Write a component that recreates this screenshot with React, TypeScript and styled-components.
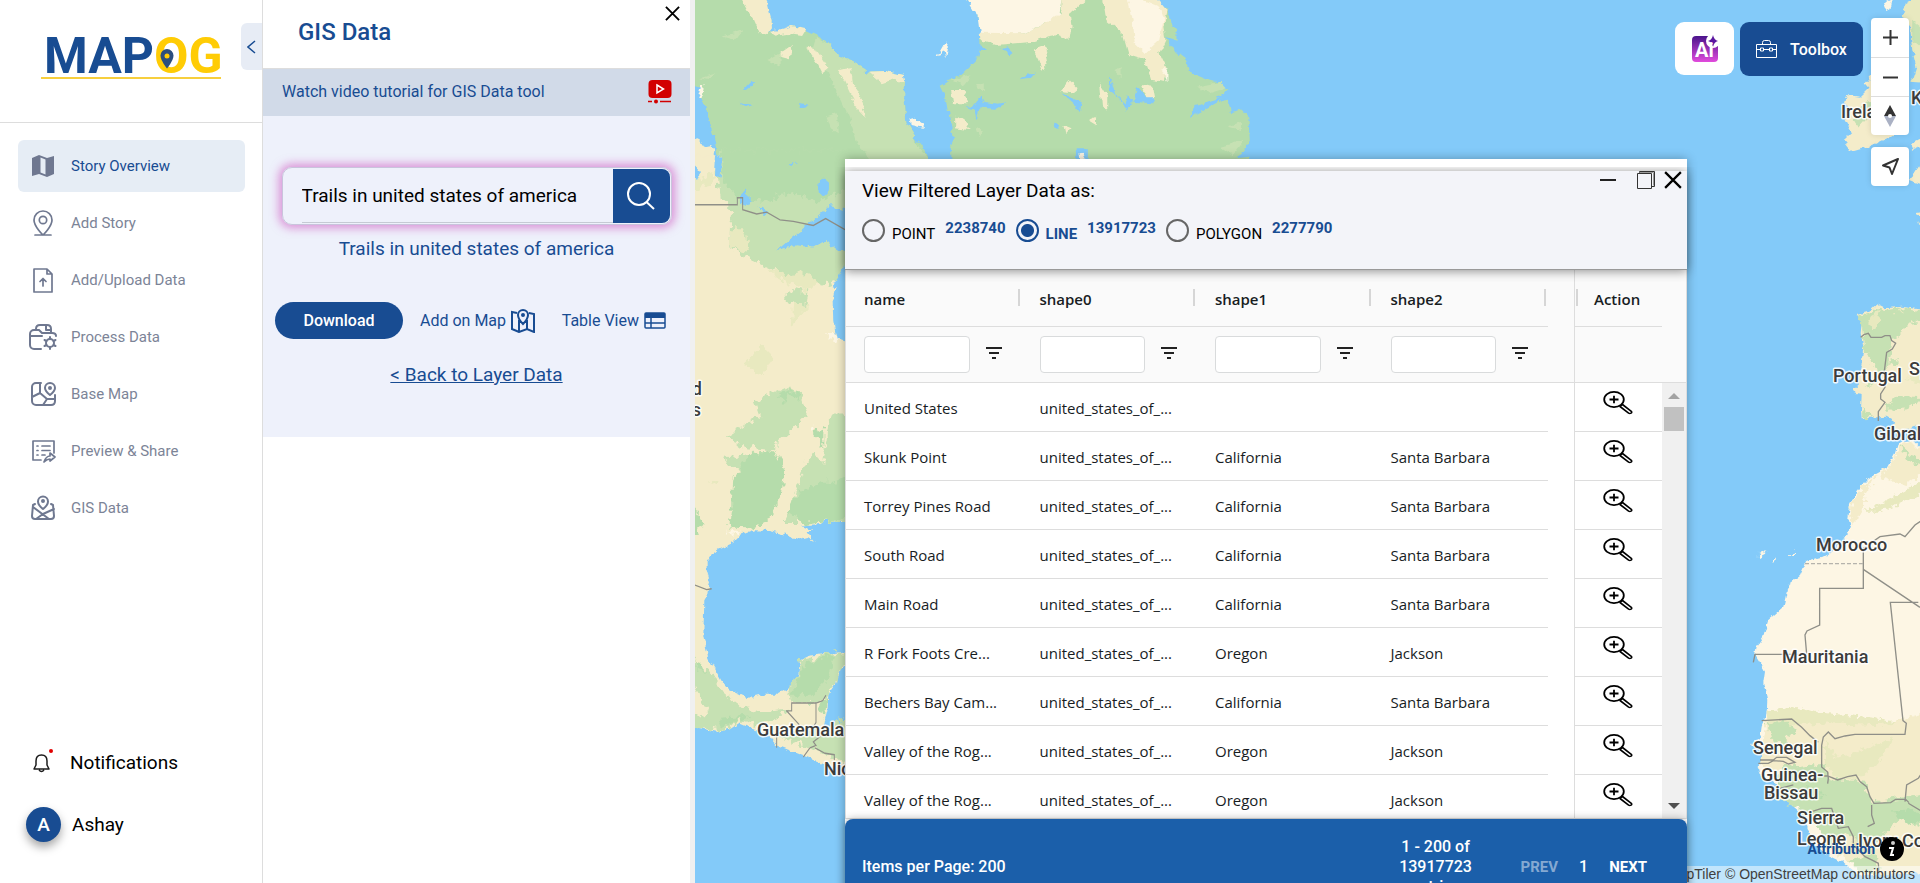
import React, { useState } from "react";
import styled, { createGlobalStyle, css } from "styled-components";

const navy = "#184c92";
const slate = "#6f7890";
const hairline = "#dddddd";

const GlobalStyle = createGlobalStyle`
  *, *::before, *::after { box-sizing: border-box; }
  body { margin: 0; font-family: Roboto, "Liberation Sans", sans-serif; color: #000; background: #fff; }
  button { font: inherit; border: 0; padding: 0; background: none; cursor: pointer; }
  input { font: inherit; margin: 0; }
  svg { display: block; flex: none; }
`;

const Page = styled.div`
  display: flex;
  height: 100vh;
  overflow: hidden;
`;

/* ---------- Sidebar ---------- */

const Sidebar = styled.nav`
  display: flex;
  flex-direction: column;
  flex: 0 0 263px;
  border-right: 1px solid ${hairline};
`;

const Brand = styled.header`
  position: relative;
  height: 123px;
  padding: 20px 0 0 40px;
  border-bottom: 1px solid ${hairline};
`;

const LogoText = styled.text`
  font-family: Roboto, sans-serif;
  font-weight: 700;
  font-size: 50px;
`;

const Collapse = styled.button`
  position: absolute;
  top: 23px;
  right: 0;
  display: grid;
  place-items: center;
  width: 21px;
  height: 47px;
  border-radius: 6px 0 0 6px;
  background: #e7ecf5;
`;

const Menu = styled.ul`
  display: flex;
  flex-direction: column;
  gap: 5px;
  flex: 1;
  margin: 0;
  padding: 17px 17px 0 18px;
  list-style: none;
`;

const MenuLink = styled.a<{ $active?: boolean }>`
  display: flex;
  align-items: center;
  gap: 14px;
  height: 52px;
  padding-left: 11px;
  border-radius: 6px;
  font-size: 15px;
  text-decoration: none;
  color: ${(p) => (p.$active ? navy : "#7c8497")};
  background: ${(p) => (p.$active ? "#e6edf5" : "transparent")};
`;

const Account = styled.div`
  display: flex;
  flex-direction: column;
  gap: 26px;
  padding: 0 24px 41px 26px;
`;

const AccountRow = styled.button`
  display: flex;
  align-items: center;
  gap: 11px;
  height: 36px;
  font-size: 19px;
  color: #000;
`;

const Avatar = styled.span`
  display: grid;
  place-items: center;
  width: 35px;
  height: 35px;
  border-radius: 50%;
  background: ${navy};
  color: #fff;
  font-weight: 500;
  box-shadow: 0 5px 10px rgba(0, 0, 0, 0.35);
`;

/* ---------- Tool panel ---------- */

const Panel = styled.section`
  flex: 0 0 432px;
  border-right: 5px solid #f0f0f0;
`;

const PanelHead = styled.header`
  display: flex;
  justify-content: space-between;
  height: 69px;
  padding: 5px 10px 0 35px;
  border-bottom: 1px solid ${hairline};
`;

const PanelTitle = styled.h1`
  margin: 0;
  padding-top: 12px;
  font-size: 24px;
  line-height: 30px;
  font-weight: 500;
  color: ${navy};
`;

const IconButton = styled.button`
  display: grid;
  place-items: center;
  width: 16px;
  height: 16px;
`;

const Tutorial = styled.a`
  display: flex;
  align-items: center;
  justify-content: space-between;
  height: 47px;
  padding: 0 18px 2px 19px;
  background: #d1dae8;
  color: ${navy};
  font-size: 16px;
  text-decoration: none;
`;

const PanelBody = styled.div`
  display: flex;
  flex-direction: column;
  align-items: center;
  height: 321px;
  padding: 51px 12px 0;
  background: #eef1fb;
  color: ${navy};
`;

const Search = styled.form`
  display: flex;
  width: 390px;
  height: 58px;
  padding: 1px 1px 1px 19px;
  border: 1px solid #c9c4dc;
  border-radius: 10px;
  overflow: hidden;
  box-shadow: 0 0 10px 3px rgba(205, 80, 190, 0.6);
`;

const SearchField = styled.input`
  flex: 1;
  min-width: 0;
  border: 0;
  border-bottom: 1px solid #c5cad4;
  padding: 0;
  outline: 0;
  background: transparent;
  font-size: 19px;
  color: #000;
`;

const SearchButton = styled.button`
  display: grid;
  place-items: center;
  width: 57px;
  background: ${navy};
  border-radius: 0 8px 8px 0;
`;

const Result = styled.p`
  margin: 12px 0 0;
  font-size: 19px;
  line-height: 24px;
`;

const Actions = styled.div`
  display: flex;
  align-items: center;
  width: 100%;
  margin-top: 41px;
  padding-right: 12px;
`;

const Download = styled.button`
  width: 128px;
  height: 37px;
  margin-right: 17px;
  border-radius: 19px;
  background: ${navy};
  color: #fff;
  font-size: 16px;
  font-weight: 500;
`;

const TextAction = styled.button`
  display: flex;
  align-items: center;
  gap: 5px;
  color: ${navy};
  font-size: 16px;
  &:last-child { margin-left: auto; }
`;

const BackLink = styled.a`
  margin-top: 24px;
  color: ${navy};
  font-size: 19px;
  line-height: 24px;
`;

/* ---------- Map ---------- */

const MapArea = styled.main`
  position: relative;
  flex: 1;
  min-width: 0;
  overflow: hidden;
  background: #83caf9;
`;

const MapCanvas = styled.svg`
  position: absolute;
  inset: 0;
  width: 100%;
  height: 100%;
`;

const PlaceName = styled.text`
  font-family: Roboto, sans-serif;
  font-weight: 500;
  font-size: 18px;
  fill: #3c3c3c;
  stroke: rgba(255, 255, 255, 0.85);
  stroke-width: 3px;
  stroke-linejoin: round;
  paint-order: stroke;
`;

const MapTools = styled.div`
  position: absolute;
  top: 18px;
  right: 11px;
  display: flex;
  align-items: flex-start;
`;

const AiButton = styled.button`
  display: grid;
  place-items: center;
  width: 59px;
  height: 53px;
  margin: 4px 6px 0 0;
  border-radius: 9px;
  background: #fff;
`;

const ToolboxButton = styled.button`
  display: flex;
  align-items: center;
  justify-content: center;
  gap: 13px;
  width: 123px;
  height: 54px;
  margin: 4px 8px 0 0;
  border-radius: 9px;
  background: ${navy};
  color: #fff;
  font-size: 16px;
  font-weight: 500;
`;

const NavStack = styled.div`
  display: flex;
  flex-direction: column;
  gap: 12px;
`;

const NavGroup = styled.div`
  width: 38px;
  border-radius: 4px;
  background: #fff;
  box-shadow: 0 0 6px rgba(0, 0, 0, 0.12);
`;

const NavButton = styled.button`
  display: grid;
  place-items: center;
  width: 100%;
  height: 39px;
  & + & { border-top: 1px solid ${hairline}; }
`;

const Credits = styled.footer`
  position: absolute;
  right: 0;
  bottom: 0;
  padding: 0 5px;
  background: rgba(255, 255, 255, 0.5);
  font: 14px/17px "Liberation Sans", Arial, sans-serif;
  color: #404040;
  white-space: nowrap;
`;

const Attribution = styled.button`
  position: absolute;
  right: 16px;
  bottom: 22px;
  display: flex;
  align-items: center;
  gap: 5px;
  color: ${navy};
  font-size: 14px;
  font-weight: 700;
  line-height: 24px;
`;

/* ---------- Data window ---------- */

const Window = styled.section`
  position: absolute;
  top: 159px;
  bottom: -32px;
  left: 150px;
  right: 233px;
  display: flex;
  flex-direction: column;
  background: #fff;
  box-shadow: 0 0 10px rgba(0, 0, 0, 0.3);
`;

const WindowHead = styled.header`
  position: relative;
  z-index: 1;
  flex: none;
  margin-top: 12px;
  height: 99px;
  padding: 0 5px 0 17px;
  background: #f3f4f9;
  border-bottom: 1px solid #999;
  box-shadow: 0 1px 10px rgba(0, 0, 0, 0.45);
  clip-path: inset(-4px -10px -12px -10px);
`;

const WindowBar = styled.div`
  display: flex;
  justify-content: space-between;
  align-items: flex-start;
`;

const WindowTitle = styled.h2`
  margin: 0;
  padding-top: 8px;
  font-size: 19px;
  line-height: 24px;
  font-weight: 400;
`;

const WindowButtons = styled.div`
  display: flex;
  align-items: center;
`;

const WindowButton = styled.button`
  display: grid;
  place-items: center;
  height: 18px;
  margin-left: 9px;
`;

const Choices = styled.fieldset`
  display: flex;
  gap: 10px;
  margin: 16px 0 0;
  padding: 0;
  border: 0;
`;

const Choice = styled.label`
  display: flex;
  height: 23px;
  font-size: 15px;
`;

const Radio = styled.input`
  appearance: none;
  width: 23px;
  height: 23px;
  margin-right: 7px;
  border: 2px solid #666;
  border-radius: 50%;
  &:checked {
    border-color: ${navy};
    background: radial-gradient(circle, ${navy} 6px, transparent 7px);
  }
`;

const ChoiceName = styled.span<{ $on: boolean }>`
  align-self: flex-end;
  line-height: 15px;
  margin-right: 10px;
  ${(p) => p.$on && css`color: ${navy}; font-weight: 700;`}
`;

const Count = styled.span`
  line-height: 18px;
  color: ${navy};
  font-weight: 700;
`;

const Grid = styled.div`
  display: flex;
  flex: 1;
  min-height: 0;
  overflow: hidden;
  border: 1px solid ${hairline};
  border-top: 0;
  font-family: "Open Sans", "Noto Sans", sans-serif;
  font-size: 15px;
  color: #181d1f;
`;

const TableHolder = styled.div`
  flex: 1;
  min-width: 0;
`;

const Table = styled.table`
  width: 100%;
  table-layout: fixed;
  border-collapse: separate;
  border-spacing: 0;
`;

const HeadCell = styled.th<{ $blank?: boolean; $pinned?: boolean; $filter?: boolean }>`
  height: ${(p) => (p.$filter ? 56 : 57)}px;
  padding: ${(p) => (p.$pinned ? "2px 0 0 1px" : p.$blank ? "0" : p.$filter ? "0 1px 0 18px" : "2px 2px 0 18px")};
  background: #fafafa;
  font-weight: 600;
  text-align: left;
  border-bottom: 1px solid ${(p) => (p.$blank && !p.$filter ? "#fafafa" : hairline)};
  border-left: ${(p) => (p.$pinned ? `1px solid ${hairline}` : "0")};
`;

const HeadLabel = styled.div<{ $pinned?: boolean }>`
  display: flex;
  flex-direction: ${(p) => (p.$pinned ? "row-reverse" : "row")};
  justify-content: ${(p) => (p.$pinned ? "flex-end" : "space-between")};
  gap: 16px;
  align-items: center;
  line-height: 18px;
`;

const Divider = styled.span`
  width: 2px;
  height: 17px;
  margin-bottom: 4px;
  background: #d6d6d6;
`;

const FilterBox = styled.div`
  display: flex;
  align-items: center;
  gap: 16px;
`;

const FilterField = styled.input`
  flex: 1;
  min-width: 0;
  height: 37px;
  border: 1px solid #d9dbdc;
  border-radius: 4px;
  background: #fff;
`;

const FilterButton = styled.button`
  display: grid;
  place-items: center;
  width: 16px;
  height: 16px;
  margin: 0 19px 4px 0;
`;

const Cell = styled.td<{ $blank?: boolean; $pinned?: boolean }>`
  height: 49px;
  padding: ${(p) => (p.$pinned ? "0 0 0 28px" : "2px 0 0 18px")};
  white-space: nowrap;
  overflow: hidden;
  vertical-align: ${(p) => (p.$pinned ? "top" : "middle")};
  border-bottom: 1px solid ${(p) => (p.$blank ? "transparent" : hairline)};
  border-left: ${(p) => (p.$pinned ? `1px solid ${hairline}` : "0")};
`;

const ZoomTo = styled.button`
  display: block;
  margin-top: 8px;
`;

const Rail = styled.div`
  display: flex;
  flex-direction: column;
  width: 24px;
`;

const RailHead = styled.div`
  height: 113px;
  background: #fafafa;
  border-bottom: 1px solid ${hairline};
`;

const Track = styled.div`
  flex: 1;
  display: flex;
  flex-direction: column;
  align-items: center;
  justify-content: space-between;
  padding: 10px 2px 9px;
  background: #f0f0f0;
`;

const TrackTop = styled.div`
  display: flex;
  flex-direction: column;
  align-items: center;
  gap: 8px;
  width: 100%;
`;

const Thumb = styled.div`
  width: 20px;
  height: 24px;
  background: #c1c1c1;
`;

const Pager = styled.footer`
  display: flex;
  align-items: center;
  flex: none;
  height: 96px;
  padding: 0 40px 0 17px;
  border-radius: 8px 8px 0 0;
  background: #1b5faa;
  color: #fff;
  font-size: 16px;
  line-height: 20px;
  font-weight: 500;
  box-shadow: 0 0 8px rgba(0, 0, 0, 0.3);
`;

const PageSize = styled.span`
  flex: 1;
`;

const PageRange = styled.span`
  width: 90px;
  margin-right: 40px;
  text-align: center;
`;

const PageButton = styled.button<{ $dim?: boolean }>`
  font-size: 15px;
  font-weight: 700;
  color: ${(p) => (p.$dim ? "#85a9d2" : "#fff")};
`;

const PageNumber = styled.span`
  margin: 0 21px;
`;

/* ---------- Drawings ---------- */

const Logo = () => (
  <svg width="184" height="62" viewBox="0 0 184 62" role="img" aria-label="MAPOG">
    <LogoText x="4" y="53" fill={navy}>MAP<tspan fill="#ffcc05">OG</tspan></LogoText>
    <path d="M127 29a6.500 6.500 0 0 1 6.500 6.500c0 5-6.500 13-6.500 13s-6.500-8-6.500-13A6.500 6.500 0 0 1 127 29z" fill="#2a4e7e" />
    <circle cx="127" cy="36" r="2.500" fill="#ffcc05" />
    <path d="M1 58h180" stroke="#f7cf3d" strokeWidth="2" />
  </svg>
);

const line = { fill: "none", stroke: slate, strokeWidth: 1.7, strokeLinecap: "round", strokeLinejoin: "round" } as const;

const menuIcons: Record<string, React.ReactNode> = {
  overview: <path d="M3 6l7-3 8 3 7-2v18l-7 3-8-3-7 2zM11.500 5.500v15l5 2v-15z" fill={slate} fillRule="evenodd" />,
  story: <g {...line}><path d="M14 26s-9-8.500-9-15a9 9 0 0 1 18 0c0 6.500-9 15-9 15zM6 26h16" /><circle cx="14" cy="11" r="3.700" /></g>,
  upload: <g {...line}><path d="M18 3H5v23h18V8zM18 3v5h5M14 20v-7M11 15.500l3-3 3 3" /></g>,
  process: <g {...line} strokeWidth="2"><path d="M12 26H5a4 4 0 0 1-4-4V11a4 4 0 0 1 4-4h5l3 3h10q4 0 4 3M1 13h12M7 6q0-4 4-4h7q4 0 4 4v3M17 3v4h4" /><circle cx="21" cy="20" r="4" /><path d="M21 14v2M21 24v2M15.500 17l2 1M24.500 22l2 1M15.500 23l2-1M24.500 18l2-1" /></g>,
  base: <g {...line} strokeWidth="2"><path d="M12 3H7a4 4 0 0 0-4 4v14a4 4 0 0 0 4 4h15q4 0 4-4v-6M11 3v10l-8 4M11 13l7 6-4 6M18 19h8M21 15s-5-4-5-7a5 5 0 0 1 10 0c0 3-5 7-5 7z" /><circle cx="21" cy="8" r="1" /></g>,
  preview: <g {...line}><path d="M12 23H4V4h21v12M8 9h1M13 9h8M8 13.500h1M13 13.500h8M8 18h1M13 18h3M15 25q2-6 6-6v-3l5 4-5 4v-2q-3 0-6 3z" /></g>,
  gis: <g {...line} strokeWidth="2"><path d="M6 10l-2 1-1 11q0 3 3 3h16q3 0 3-3l-1-11-2-1M4 13l16 12M25 15l-11 5-7 5M14 15s-5-4-5-7.500a5 5 0 0 1 10 0C19 11 14 15 14 15z" /><circle cx="14" cy="7" r="1" /></g>,
};

const Cross = ({ size, weight }: { size: number; weight: number }) => (
  <svg width={size} height={size} viewBox="0 0 16 16" fill="none" stroke="#000" strokeWidth={weight}>
    <path d="M1 1l14 14M15 1L1 15" />
  </svg>
);

const ZoomIcon = () => (
  <svg width="30" height="24" viewBox="0 0 30 24" fill="none" stroke="#000">
    <ellipse cx="11" cy="8.500" rx="9.800" ry="7.600" strokeWidth="1.800" />
    <path d="M6.500 8.500h9M11 4.800v7.400" strokeWidth="1.800" />
    <path d="M17 15.500l2.500-2 8.800 6.800q1 1-.300 1.800-1.200.700-2.400 0z" strokeWidth="1.600" strokeLinejoin="round" />
  </svg>
);

const water = "#83caf9";
const forest = "#b5dcab";
const meadow = "#c6e1b3";
const sand = "#f4ecca";
const cream = "#fdf6e4";
const scrub = "#e8e9bf";

const NorthernCanada = () => (
  <g transform="scale(.4082 .3333) translate(1690 0)">
    <g filter="url(#coast)">
      <path fill={forest} d="M-10-20H188v20l2 20 10 40 1 25-11 15 7-3 33-9 20-10 22 6 38 21 30 25 20 35 35 15 35 25 2 20 8-10 40-2 40 12 7 20-2 25-3 20 6 30 2 45 20 40-5 13 25 17 15 40 20 70H-10z" />
      <path fill={meadow} d="M310 110l35 25 15 30 35 15 35 25 2 20 8-10 40-2 40 12 7 25-2 40 5 75 20 40-5 13 40 57 15 35H460l-50-80-20-80-20-50-20-50-20-50-30-50z" />
      <path fill={sand} d="M118-20h70v20l12 60 1 25-11 18h-20l-15-43-15-30zM197 97l53-19 35 10-10 20-35-6-30 5zM437 215l43-2 42 12 5 25-27-12-30 12zM285 140l25 10 30 55-15 15-12-30zM360 210l35-5 5 50 15 30 15 65-35-70-15-40zM215 165l35-30-5 40zM395 290l20 20 15 45-25-35z" />
      <path fill={meadow} d="M80 110l50-20-20 30zM25 235l40-15-20 20zM335 350l25-10 5 60-20-15zM190 180l30-20v40z" />
      <path fill={forest} d="M680-20v20l20 30 10 45 2 65-12 45-30 35-30 20-28 17 13 33 7 40 8 50 8 35-11 25 3 90h740l-10-60-30 5 32-50-4-75-18-23-25 13-5-40-30-5 27-25-17-20-30-10-40-20-15-40-25-25-10-20-15-25 27 10V90l-17-30-5-35-20-10-15 5L1150-20H680z" />
      <path fill={cream} d="M680-20h230v20l-5 50-35 20-50 30-60 5-50-7-5-48-25-50z" />
      <path fill={sand} d="M710 98l110 2 50-30 40-30 20-10 5 50-5 40-30-15-25 5-35 15-40 5-50 5-38-15zM910-20h60v20l-40 40-20 10zM1010-20h140v20l20 30-10 50 5 40-15 40 20 50-10 35-30-5-15-60-40-15-15-65-40-40zM840 150l30-15 8 50-15 28-10-35zM640 270h30l10 40h-35zM650 350l25 10 10 30-35-5zM1105 255l30 5 5 35-20 5zM905 275l25-35 20 25-15 15zM1005 250l20 40v40l-15-10zM975 360l20-10v25zM915 375l20 10-15 20z" />
      <path fill={cream} d="M1070-20h40v20l40 20 10 40-10 60-35 40-25-30-5-70zM1155 205h15v40z" />
      <path fill={meadow} d="M1240 260l60-15 15 20-40 15zM1300 440l60-20-30 45zM1320 380l30-15v25zM700 260l20-10v25zM640 240l50-15-20 30zM700 380l20 10-10 25zM1040 215l15-10v30z" />
    </g>
    <g fill={water} filter="url(#coast)">
      <path d="M-10 250l38 10-8 30 15 15 15 65 12 60 15 110h-90zM130 270l20-27 14 5-28 25zM122 305l32 10-15 7zM270 312l22 5-20 5zM238 492l28-10-20 15zM763 145l14-6 16 20-10 10zM803 238l45-24-15 20zM675 320l25-6 12-28 8 20 35 5 25-5-30 20-40-3-8 40-5-35zM910 280l50 25-5 32-10-20zM1028 230l15 55 25 25 5-25 15 20 10-45 20 35h22l-5 15-50-5-15 30-10-30-35-35zM1225 350l10-30 80-30-20 15-50 35zM888 370l18 5-5 15zM945 445h30v50h-28zM710 150h18l-16-15z" />
      <path fill={cream} d="M538 358l12-5 25 22-4 8-30-8zM605 170l20-43 8 15-5 30-5-25-15 25zM952 460l12-2 5 20-15 5zM18 295l10-40h8l-10 40z" />
      <path fill={sand} d="M-10 420l30-5 15 25 20-5 5 20-12 70h-60z" />
    </g>
  </g>
);

const CentralAmerica = () => (
  <g transform="translate(690 160) scale(.3333 .461)">
    <path fill={sand} filter="url(#coast)" d="M-20-10H480V785h-40l-30-5-25 10-55 3 40 10-20 7 25 20-25-10-25 5-45-13-40-7-45-2-45 12-20 15-45 15-20 10-15 15v20l10 25-5 25-12 15-3 75 15 50 40 50 25 20 50 17 40-7h50l40-15 25-25 5-35 30-10 70-5 50-5v25l-35 20-10 30-20 20-3 35-12 35 80-15v105l-80-10-70-20-70-20-30-25-80-25-30 15-30 7-110-17z" />
    <g filter="url(#patch)">
      <path fill={meadow} d="M95-20H480V230l-40 30-40 10-70-20h-50l-45-15-70-25-47-20 2-50 10-30-40-25-10-55z" />
      <path fill={forest} d="M180-20H480V60l-100 30-80-20-70 20-80-10-50-30-5-70z" />
      <path fill={scrub} d="M235 238l60 12 50-5 40 20-30 20-70-20zM120 150h40l20 50-60-10zM310 310l45 5-50 45zM15 10l20 30 40-15-10 30-60 10zM60 700l30-10-15 25zM160 440l60-40 30 30-40 40z" />
      <path fill={meadow} d="M278 305l30-25 50 5-5 30zM195 525l95-33 45 18 15 40-50 40-60 40-90-10-40-20 100-45zM105 655l5-10 150-15-50 50-90-15zM420 550h60v235H280l30-50 30-70 30-30 30 20z" />
      <path fill={forest} d="M130 690l50-50 60-10 25 10 20 40-10 50-35 50-50 17-75-2 10-55zM430 700l50-20v95l-140 15-50-30 40-40 60-20zM260 510l40-12-10 30zM-10 765l25-5 25 25-20 22-30 3zM290 495l30 10 10 20zM370 590l30-10v50z" />
      <path fill={meadow} d="M0 1075l60 35 40 45 50 30 70 10 80-5-50 25-50 10-50-10-50 25-120-15v-15l80-10-60-70zM325 1120l5-35 100-15 50-3v23l-40 20-5 30-35 30-22 8h-73l-10-28zM380 1230l90-20v100l-120-40-90-20z" />
      <path fill={forest} d="M345 1090l90-15-20 50-50 35h-60zM20 1080l30 30-35-5zM90 1210l90-5-80 25zM390 1180l20-15-5 50z" />
      <path fill={cream} d="M115 800l35 8-25 8zM415 375h25l10 18-30-5zM360 575l15 5-8 12z" />
    </g>
    <path fill={water} filter="url(#coast)" d="M262 195l58-35 50-30 45-30 65 8v94l-40-7-35-20-35 15-50-5zM480 225l-20 10-35 40h15l-12 35 2 40 10 35 40 10zM385 50l15-12 18 12-2 20-15 8-15-10zM150 75l20-15-3 15 18 10-15 15-20-5zM205 100l30 10-10 8zM15 12l18 14-18 18zM75-10h22l-5 48-20-5zM290 8l35-5-20 10z" />
    <path fill="none" stroke="#8f8f88" strokeWidth="3" d="M15 97h127V82h16v26l42 9 30-4 40 17 40 3 60 9 37-15 58 24M15 922l35 10 15-2M288 1195h17v-17h73v42l-8 10M290 1195l38 30M260 1240v35M340 1295l20-20 18-5-8-8 35-20M375 1275l30 12 28 3v12M378 1178l20-5 10-12" />
  </g>
);

const Europe = () => (
  <g>
    <g transform="translate(1240 0) scale(.4337 .3333)" filter="url(#coast)">
      <path fill={scrub} d="M1560-10l-25 20-7 40 17 30 5 70 10 50-12 45 40 5V-10z" />
      <path fill={sand} d="M1455 225l-15 25 10 15-20 25-30-5-5 25 15 20-15 30 15 35-20 25 20 35 40-15 50-30 40-30V240zM1545 435l45-30v30l-40 15zM1545 540l20-40h20v60z" />
      <path fill={meadow} d="M1550 60l20 20v60l-20-20zM1445 300l20 20-40 60-10-20z" />
      <path fill={cream} d="M1485 10l20-12-5 30-8 5z" />
    </g>
    <g transform="translate(1685 190) scale(.3333)">
      <path fill={sand} filter="url(#coast)" d="M515 375l35-10 25-23 25 13 50-5 80 12v338l-50 10-20 10-20 15-15-15 5-25-25-15-75 5-2-25 2-45-18-3-7-12 20-20-5-20 10-40 5-50-8-40 3-30zM690 70l30-5v20zM695 95h20v15z" />
      <g filter="url(#patch)">
        <path fill={meadow} d="M520 378l32-8 25-20 25 10 50-5 80 12v25l-60 10-50 50-5 45-15 50-30-10-35-60-5-60zM533 650l38 30-40 2zM600 660l30-40 90 5-50 30zM610 515l30-8-10 20zM535 585l30-5-10 12z" />
        <path fill={scrub} d="M550 400l30-45 5 25-20 50zM660 570l60-30v40zM640 355l15 12h-20z" />
      </g>
      <path fill="none" stroke="#8f8f88" strokeWidth="4" d="M527 442l10-8 13-4 8 12h32l10-5h15l5 15 12 8-10 17-17 10-3 25-5 40 5 30-2 10-13 20v15l13 10-20 28v28" />
    </g>
  </g>
);

const Africa = () => (
  <g transform="translate(1685 500) scale(.3333)">
    <path fill={cream} filter="url(#coast)" d="M640-175l-10 35-25 45-55 30-35 40-20 40-5 40 8 25-28 50-40 35-65 17-20 46-35 27-15 65-45 40-15 50-20 30-5 25 15 25 15 25-5 35 12 50-2 40-15 40-5 35-27 18 27 17 15 30-22 20 7 30 45 20 30 30 20 35 35 30 15 45 15 40 35 30 50 25 30 25 30 20 70-10 160-15V-150l-50-5-25-25z" />
    <g filter="url(#patch)">
      <path fill={sand} d="M643-168l-10 33-25 45-55 30-33 35-20 40-5 40 8 20 35-60 20-60 40-20 60 20 82-50v-55l-40-5-25-25zM245 632l95-10 80 18 120 10 80 15 100-25v480l-130 5-60-15-110-75-30-85-55-60-60-60-50-40 20-120z" />
      <path fill={scrub} d="M245 632l95-10 80 18 120 10 100 15-60 10-140-5-190 10zM540 35l80-40 100-60v40l-60 30-80 30zM430 780l80-20 120-50-60 90-60 40-70-10zM490 960l60 40 20 60-60-10zM420 720l40 60-40 30z" />
      <path fill={meadow} d="M645-168l35 33 50 20v20l-60-20zM245 670l60-5 30 30-30 20v20l-40-10zM290 790l60 10 75-10 5 45 110 10 20 60 150-20v100l-60-30-90 80-40-10-40-30-45 50-35-60-60-60-70-30zM490 1080l80-20 15 50-50 15z" />
      <path fill={forest} d="M270 820l40 10-30 20zM620 935l60-10 40 30-50 20zM360 860l60 20-30 20z" />
      <path fill={cream} d="M580-80l20 20-10 40-60 20z" />
      <path fill={cream} d="M218 165l20-12-12 25zM258 178l12-2-2 10zM312 170l18-20-5 18z" />
    </g>
    <g fill="none" stroke="#8f8f88" strokeWidth="4">
      <path d="M720 55l-30 20-30 35-15-8-60 8-50 35v120H404v110l-38 18-6 12 5 57M205 487l5-24h150M535 208l170 114M700 307h-84l38 355 10 8-4 33H510l-30 5-30 8-20-20-15 15-5 25v65l18 15 2 20-2 15M230 662l90-5 30 25 25 25 25 20M225 780h40l10-8h30l25 15-20 5-15-8-30-2-15 8h-30M400 828h28l30 12 30-10 25-5 12 20 20 15 10 30 12 20 50-2 15-10h30l10 10M660 905l5-50 35-20 20-30M560 915v30l8 25-20 10M380 935l30-10h30l10 30 10 30 30-5 15 30v20M510 1040l30 30 20 10 20 10 2 30M285 865l40-10M720 940l-50-30" />
      <path stroke="#b5b3ac" strokeDasharray="12 6" d="M360 191h175" />
    </g>
  </g>
);

const places: { name: string; x: number; y: number; end?: boolean }[] = [
  { name: "United", x: 702, y: 395, end: true },
  { name: "States", x: 701, y: 416, end: true },
  { name: "Guatemala", x: 757, y: 736 },
  { name: "Nicaragua", x: 824, y: 775 },
  { name: "Ireland", x: 1841, y: 118 },
  { name: "Kingdom", x: 1911, y: 104 },
  { name: "Portugal", x: 1833, y: 382 },
  { name: "Spain", x: 1909, y: 375 },
  { name: "Gibraltar", x: 1874, y: 440 },
  { name: "Morocco", x: 1816, y: 551 },
  { name: "Mauritania", x: 1782, y: 663 },
  { name: "Senegal", x: 1753, y: 754 },
  { name: "Guinea-", x: 1761, y: 781 },
  { name: "Bissau", x: 1764, y: 799 },
  { name: "Sierra", x: 1797, y: 824 },
  { name: "Leone", x: 1797, y: 845 },
  { name: "Ivory Coast", x: 1858, y: 847 },
];

const WorldMap = () => (
  <MapCanvas viewBox="695 0 1225 883" preserveAspectRatio="xMinYMin slice" role="img" aria-label="World map">
    <defs>
      <filter id="coast" x="-5%" y="-5%" width="110%" height="110%">
        <feTurbulence type="fractalNoise" baseFrequency="0.06" numOctaves="2" seed="4" />
        <feDisplacementMap in="SourceGraphic" scale="16" xChannelSelector="R" yChannelSelector="G" />
      </filter>
      <filter id="patch" x="-5%" y="-5%" width="110%" height="110%">
        <feTurbulence type="fractalNoise" baseFrequency="0.06" numOctaves="2" seed="4" />
        <feDisplacementMap in="SourceGraphic" scale="30" xChannelSelector="R" yChannelSelector="G" />
      </filter>
    </defs>
    <NorthernCanada />
    <CentralAmerica />
    <Europe />
    <Africa />
    {places.map((p) => (
      <PlaceName key={p.name} x={p.x} y={p.y} textAnchor={p.end ? "end" : "start"}>{p.name}</PlaceName>
    ))}
  </MapCanvas>
);

/* ---------- Data ---------- */

const menu = [
  ["overview", "Story Overview"],
  ["story", "Add Story"],
  ["upload", "Add/Upload Data"],
  ["process", "Process Data"],
  ["base", "Base Map"],
  ["preview", "Preview & Share"],
  ["gis", "GIS Data"],
];

const kinds = [
  ["POINT", "2238740"],
  ["LINE", "13917723"],
  ["POLYGON", "2277790"],
];

const columns = ["name", "shape0", "shape1", "shape2"];

const rows = [
  ["United States", "", ""],
  ["Skunk Point", "California", "Santa Barbara"],
  ["Torrey Pines Road", "California", "Santa Barbara"],
  ["South Road", "California", "Santa Barbara"],
  ["Main Road", "California", "Santa Barbara"],
  ["R Fork Foots Cre...", "Oregon", "Jackson"],
  ["Bechers Bay Cam...", "California", "Santa Barbara"],
  ["Valley of the Rog...", "Oregon", "Jackson"],
  ["Valley of the Rog...", "Oregon", "Jackson"],
];

const DataWindow = () => {
  const [kind, setKind] = useState("LINE");
  return (
    <Window aria-label="Layer data">
      <WindowHead>
        <WindowBar>
          <WindowTitle>View Filtered Layer Data as:</WindowTitle>
          <WindowButtons>
            <WindowButton aria-label="Minimize">
              <svg width="28" height="18"><path d="M0 9h16" stroke="#222" strokeWidth="2" /></svg>
            </WindowButton>
            <WindowButton aria-label="Maximize">
              <svg width="18" height="18" fill="none" stroke="#333">
                <path d="M.5 2.500h14v15H.5z" /><path d="M2.500 2V.5h15v15H15" /><path d="M2.500 1.500h14v13" stroke="#999" />
              </svg>
            </WindowButton>
            <WindowButton aria-label="Close"><Cross size={18} weight={2} /></WindowButton>
          </WindowButtons>
        </WindowBar>
        <Choices>
          {kinds.map(([name, count]) => (
            <Choice key={name}>
              <Radio type="radio" name="kind" checked={kind === name} onChange={() => setKind(name)} />
              <ChoiceName $on={kind === name}>{name}</ChoiceName>
              <Count>{count}</Count>
            </Choice>
          ))}
        </Choices>
      </WindowHead>
      <Grid>
        <TableHolder>
          <Table>
            <colgroup>
              {columns.map((c) => <col key={c} />)}
              <col width="26" />
              <col width="88" />
            </colgroup>
            <thead>
              <tr>
                {columns.map((c) => (
                  <HeadCell key={c} scope="col"><HeadLabel>{c}<Divider /></HeadLabel></HeadCell>
                ))}
                <HeadCell as="td" $blank />
                <HeadCell scope="col" $pinned><HeadLabel $pinned>Action<Divider /></HeadLabel></HeadCell>
              </tr>
              <tr>
                {columns.map((c) => (
                  <HeadCell as="td" key={c} $filter>
                    <FilterBox>
                      <FilterField aria-label={`Filter ${c}`} />
                      <FilterButton aria-label={`Filter options for ${c}`}>
                        <svg width="16" height="12" stroke="#222" strokeWidth="2"><path d="M0 1h16M3 6h10M6 11h4" /></svg>
                      </FilterButton>
                    </FilterBox>
                  </HeadCell>
                ))}
                <HeadCell as="td" $blank $filter />
                <HeadCell as="td" $pinned $filter />
              </tr>
            </thead>
            <tbody>
              {rows.map(([name, state, county], i) => (
                <tr key={i}>
                  <Cell>{name}</Cell>
                  <Cell>united_states_of_...</Cell>
                  <Cell>{state}</Cell>
                  <Cell>{county}</Cell>
                  <Cell $blank />
                  <Cell $pinned><ZoomTo aria-label={`Zoom to ${name}`}><ZoomIcon /></ZoomTo></Cell>
                </tr>
              ))}
            </tbody>
          </Table>
        </TableHolder>
        <Rail>
          <RailHead />
          <Track>
            <TrackTop>
              <svg width="12" height="6"><path d="M0 6l6-6 6 6z" fill="#a3a3a3" /></svg>
              <Thumb />
            </TrackTop>
            <svg width="12" height="6"><path d="M0 0l6 6 6-6z" fill="#505050" /></svg>
          </Track>
        </Rail>
      </Grid>
      <Pager>
        <PageSize>Items per Page: 200</PageSize>
        <PageRange>1 - 200 of 13917723 entries</PageRange>
        <PageButton $dim>PREV</PageButton>
        <PageNumber>1</PageNumber>
        <PageButton>NEXT</PageButton>
      </Pager>
    </Window>
  );
};

export default function App() {
  const [query, setQuery] = useState("Trails in united states of america");
  return (
    <Page>
      <GlobalStyle />
      <Sidebar>
        <Brand>
          <Logo />
          <Collapse aria-label="Collapse sidebar">
            <svg width="9" height="14" fill="none" stroke={navy} strokeWidth="1.500"><path d="M8 1L1 7l7 6" /></svg>
          </Collapse>
        </Brand>
        <Menu>
          {menu.map(([id, label], i) => (
            <li key={id}>
              <MenuLink href="#" $active={i === 0}>
                <svg width="28" height="28" viewBox="0 0 28 28">{menuIcons[id]}</svg>
                {label}
              </MenuLink>
            </li>
          ))}
        </Menu>
        <Account>
          <AccountRow>
            <svg width="33" height="28" viewBox="0 0 33 28" fill="none" stroke="#1c1c1c" strokeWidth="1.500" strokeLinejoin="round">
              <path d="M8 21l2-4v-4q0-6 5.500-6T21 13v4l2 4zM13 22q2.500 3 5 0" />
              <circle cx="25" cy="3" r="2" fill="#e00000" stroke="none" />
            </svg>
            Notifications
          </AccountRow>
          <AccountRow><Avatar>A</Avatar>Ashay</AccountRow>
        </Account>
      </Sidebar>

      <Panel>
        <PanelHead>
          <PanelTitle>GIS Data</PanelTitle>
          <IconButton aria-label="Close panel"><Cross size={15} weight={2} /></IconButton>
        </PanelHead>
        <Tutorial href="#">
          Watch video tutorial for GIS Data tool
          <svg width="24" height="24" viewBox="0 0 24 24">
            <rect x=".5" y="0" width="23" height="18" rx="4" fill="#d20000" />
            <path d="M9 5l6.500 4L9 13z" fill="none" stroke="#fff" strokeWidth="1.500" />
            <path d="M0 21.500h4M12 21.500h11" stroke="#d20000" strokeWidth="1.500" />
            <circle cx="8" cy="21.500" r="2" fill="#d20000" />
          </svg>
        </Tutorial>
        <PanelBody>
          <Search onSubmit={(e) => e.preventDefault()}>
            <SearchField aria-label="Search data" value={query} onChange={(e) => setQuery(e.target.value)} />
            <SearchButton aria-label="Search">
              <svg width="28" height="28" fill="none" stroke="#fff" strokeWidth="2"><circle cx="12" cy="12" r="11" /><path d="M19.500 20l7.500 7" /></svg>
            </SearchButton>
          </Search>
          <Result>Trails in united states of america</Result>
          <Actions>
            <Download>Download</Download>
            <TextAction>
              Add on Map
              <svg width="24" height="24" fill="none" stroke={navy} strokeWidth="2">
                <path d="M6 4L1 3v17l7 3 8-3 7 3V5l-5-1M8 11v12M16 11v9M12 15s-5-5-5-9a5 5 0 0 1 10 0c0 4-5 9-5 9z" /><circle cx="12" cy="6" r="1" />
              </svg>
            </TextAction>
            <TextAction>
              Table View
              <svg width="22" height="17" fill="none" stroke={navy} strokeWidth="1.500">
                <rect x="1" y="1" width="20" height="15" rx="1" /><path d="M1 3.500h20" strokeWidth="5" /><path d="M1 11h20M7 6v10" />
              </svg>
            </TextAction>
          </Actions>
          <BackLink href="#">&lt; Back to Layer Data</BackLink>
        </PanelBody>
      </Panel>

      <MapArea>
        <WorldMap />
        <Credits>© MapTiler © OpenStreetMap contributors</Credits>
        <Attribution>
          Attribution
          <svg width="24" height="24"><circle cx="12" cy="12" r="12" fill="#000" /><circle cx="13" cy="6" r="2" fill="#ccc" /><path d="M9 11h4l-2 7h3" fill="none" stroke="#fff" strokeWidth="2" /></svg>
        </Attribution>
        <DataWindow />
        <MapTools>
          <AiButton aria-label="AI assistant">
            <svg width="30" height="28" viewBox="0 0 30 28">
              <defs>
                <linearGradient id="ai" x2="0" y2="1"><stop stopColor="#4a148c" /><stop offset="1" stopColor="#e14bdc" /></linearGradient>
              </defs>
              <rect x="2" y="1" width="26" height="26" rx="4" fill="url(#ai)" />
              <circle cx="23" cy="6" r="7" fill="#fff" />
              <path d="M23 0q1 5 5 6-4 1-5 6-1-5-5-6 4-1 5-6z" fill="#5a17a0" />
              <text x="5" y="22" fontFamily="Roboto, sans-serif" fontSize="20" fontWeight="700" fill="#fff">Ai</text>
            </svg>
          </AiButton>
          <ToolboxButton>
            <svg width="21" height="18" fill="none" stroke="#fff"><path d="M.5 4.500h20v13H.5zM6.500 4.500v-2q0-2 2-2h4q2 0 2 2v2M.5 9.500h4m3 0h6m3 0h4M4.500 8v3h3V8zM13.500 8v3h3V8z" /></svg>
            Toolbox
          </ToolboxButton>
          <NavStack>
            <NavGroup>
              <NavButton aria-label="Zoom in"><svg width="15" height="15" stroke="#333" strokeWidth="2"><path d="M0 7.500h15M7.500 0v15" /></svg></NavButton>
              <NavButton aria-label="Zoom out"><svg width="15" height="15" stroke="#333" strokeWidth="2"><path d="M0 7.500h15" /></svg></NavButton>
              <NavButton aria-label="Reset bearing">
                <svg width="12" height="22"><path d="M0 11L6 0l6 11z" fill="#333" /><path d="M0 11l6 11 6-11z" fill="#aab1c4" /><circle cx="6" cy="11" r="2" fill="#fff" /></svg>
              </NavButton>
            </NavGroup>
            <NavGroup>
              <NavButton aria-label="Find my location"><svg width="17" height="17" fill="none" stroke="#333" strokeWidth="2" strokeLinejoin="round"><path d="M1 7.500L16 1l-6 15-2.500-6.500z" /></svg></NavButton>
            </NavGroup>
          </NavStack>
        </MapTools>
      </MapArea>
    </Page>
  );
}
